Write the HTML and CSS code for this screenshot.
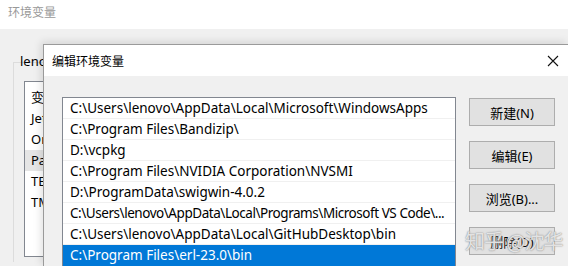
FILE: index.html
```html
<!DOCTYPE html>
<html lang="zh-CN">
<head>
  <meta charset="UTF-8" />
  <title>编辑环境变量</title>
  <link rel="stylesheet" href="styles.css">
</head>
<body>

  <div class="fenster">
    <div class="fenster-titel">环境变量</div>
    <div class="fenster-inhalt">
      <div class="gruppe">
        <div class="gruppe-label">lenovo 的用户变量(U)</div>
        <div class="gruppe-rahmen">
          <div class="alt-liste">
            <div class="alt-zeile">变量</div>
            <div class="alt-zeile">JetBrains</div>
            <div class="alt-zeile">OneDrive</div>
            <div class="alt-zeile markiert">Path</div>
            <div class="alt-zeile">TEMP</div>
            <div class="alt-zeile">TMP</div>
          </div>
        </div>
      </div>
    </div>
  </div>

  <div class="dialog">
    <div class="dialog-titel">
      <span>编辑环境变量</span>
      <svg class="schliessen" width="12" height="12" viewBox="0 0 12 12">
        <path d="M1 1 L11 11 M11 1 L1 11" stroke="#111" stroke-width="1.1" fill="none"/>
      </svg>
    </div>
    <div class="dialog-inhalt">
      <div class="pfad-liste">
        <div class="pfad">C:\Users\lenovo\AppData\Local\Microsoft\WindowsApps</div>
        <div class="pfad">C:\Program Files\Bandizip\</div>
        <div class="pfad">D:\vcpkg</div>
        <div class="pfad">C:\Program Files\NVIDIA Corporation\NVSMI</div>
        <div class="pfad">D:\ProgramData\swigwin-4.0.2</div>
        <div class="pfad eng">C:\Users\lenovo\AppData\Local\Programs\Microsoft VS Code\...</div>
        <div class="pfad">C:\Users\lenovo\AppData\Local\GitHubDesktop\bin</div>
        <div class="pfad aktiv">C:\Program Files\erl-23.0\bin</div>
      </div>
      <div class="knoepfe">
        <div class="knopf">新建(N)</div>
        <div class="knopf">编辑(E)</div>
        <div class="knopf">浏览(B)...</div>
        <div class="knopf">删除(D)</div>
      </div>
    </div>
    <div class="wasserzeichen">知乎 @沈华</div>
  </div>

</body>
</html>
```

FILE: styles.css
```css
* {
  box-sizing: border-box;
}

body {
  margin: 0;
  width: 568px;
  height: 266px;
  overflow: hidden;
  position: relative;
  font-family: "Noto Sans", "Noto Sans CJK SC", sans-serif;
  font-size: 13px;
  color: #000;
  background: #f0f0f0;
}

/* hinteres Fenster */
.fenster {
  height: 100%;
  display: flex;
  flex-direction: column;
}

.fenster-titel {
  height: 29px;
  background: #fff;
  color: #999;
  font-family: "Noto Sans CJK SC", sans-serif;
  font-size: 12px;
  padding: 3px 0 0 8px;
}

.fenster-inhalt {
  flex: 1;
  background: #f0f0f0;
  padding: 23px 0 0 13px;
}

.gruppe-label {
  padding-left: 7px;
  line-height: 18px;
  white-space: nowrap;
}

.gruppe-rahmen {
  margin-top: -8px;
  border-left: 1px solid #dcdcdc;
  border-top: 1px solid #dcdcdc;
  height: 200px;
  padding: 18px 0 0 10px;
}

.alt-liste {
  background: #fff;
  border: 1px solid #828790;
  height: 176px;
  padding-top: 5px;
}

.alt-zeile {
  height: 21px;
  line-height: 21px;
  padding-left: 6px;
  white-space: nowrap;
}

.alt-zeile.markiert {
  background: #e5e5e5;
}

/* vorderer Dialog */
.dialog {
  position: absolute;
  left: 43px;
  top: 44px;
  right: 0;
  bottom: 0;
  border-left: 1px solid #9a9a9a;
  border-top: 1px solid #9a9a9a;
  box-shadow: -2px -2px 8px rgba(0, 0, 0, 0.12);
  display: flex;
  flex-direction: column;
}

.dialog-titel {
  height: 31px;
  background: #fff;
  display: flex;
  align-items: center;
  justify-content: space-between;
  padding: 0 9px 0 8px;
  font-family: "Noto Sans CJK SC", sans-serif;
  font-size: 12px;
}

.dialog-inhalt {
  flex: 1;
  background: #f0f0f0;
  display: flex;
  gap: 13px;
  padding: 21px 0 0 18px;
}

.pfad-liste {
  width: 394px;
  background: #fff;
  border: 1px solid #828790;
  border-bottom: none;
  align-self: stretch;
}

.pfad {
  height: 21px;
  line-height: 21px;
  padding-left: 7px;
  border-bottom: 1px solid #f0f0f0;
  white-space: nowrap;
  overflow: hidden;
  font-size: 13.5px;
}

.pfad.eng {
  letter-spacing: -0.45px;
}

.pfad.aktiv {
  background: #0078d7;
  color: #fff;
  border-bottom: none;
}

.knoepfe {
  display: flex;
  flex-direction: column;
  gap: 15px;
  padding-top: 1px;
}

.knopf {
  width: 86px;
  height: 28px;
  background: #e1e1e1;
  border: 1px solid #adadad;
  display: flex;
  align-items: center;
  justify-content: center;
  font-size: 13px;
}

.wasserzeichen {
  position: absolute;
  left: 421px;
  top: 181px;
  font-family: "Noto Sans CJK SC", sans-serif;
  font-size: 20px;
  color: rgba(255, 255, 255, 0.75);
  text-shadow: 0 0 1px #888, 0 0 2px #aaa;
  white-space: nowrap;
  letter-spacing: -1px;
}
```
